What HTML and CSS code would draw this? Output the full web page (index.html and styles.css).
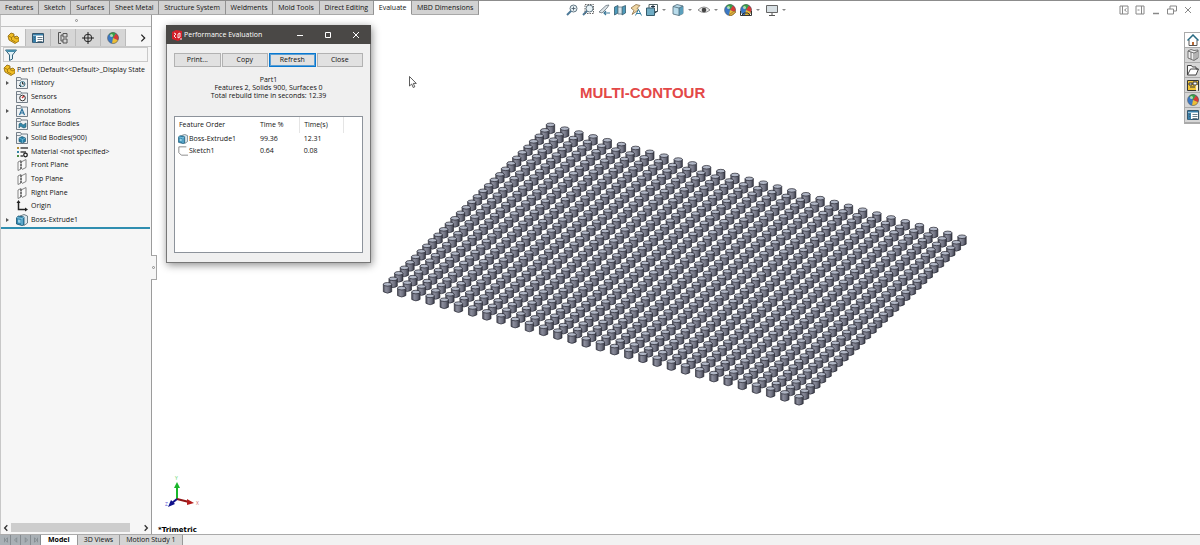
FILE: index.html
```html
<!doctype html>
<html lang="en">
<head>
<meta charset="utf-8">
<meta name="viewport" content="width=device-width, initial-scale=1">
<title>Part1</title>
<link rel="stylesheet" href="styles.css">
</head>
<body>

<!-- shared icon shapes -->

<svg class="defs" aria-hidden="true">
	<defs>
		<linearGradient id="steel">
			<stop offset="0" stop-color="#4b4c59"/>
			<stop offset=".3" stop-color="#8b8d9c"/>
			<stop offset=".65" stop-color="#717382"/>
			<stop offset="1" stop-color="#383945"/>
		</linearGradient>
		<symbol id="part" viewBox="0 0 12 12">
			<path d="M1 4l3-3 3 1v3l3-1 2 2v3l-4 2.500-6-3.500z" fill="#f0bd25" stroke="#8d6507" stroke-width=".8"/>
			<path d="M1.500 4l3 1.500 2.500-2M4.500 5.500v2.500l4 2M7 5.500l3 1.500 1.500-1" fill="none" stroke="#8d6507" stroke-width=".7"/>
		</symbol>
		<symbol id="list" viewBox="0 0 12 12">
			<path d="M.5 1.500h11v9H.5z" fill="#fff" stroke="#36566d"/>
			<path d="M1 2h10v1.500H1zM1 4h3v6.500H1z" fill="#3980aa"/>
			<path d="M5.500 5.500h5M5.500 7.500h5M5.500 9.500h5M2 5.500h1M2 7.500h1" stroke="#425d6d" stroke-width=".8"/>
		</symbol>
		<symbol id="config" viewBox="0 0 12 12">
			<path d="M4 .5H1.500v11H4M6 1.500h4v3.500H6zM6 7h4v4H6zM4 3v6M4 3h2M4 9h2" fill="none" stroke="#555"/>
		</symbol>
		<symbol id="target" viewBox="0 0 12 12">
			<circle cx="6" cy="6" r="3.800" fill="none" stroke="#222"/>
			<path d="M6 0v12M0 6h12" stroke="#222"/>
		</symbol>
		<symbol id="ball" viewBox="0 0 12 12">
			<circle cx="6" cy="6" r="5.500" fill="#3b78c4"/>
			<path d="M6 6L2 2.200A5.500 5.500 0 0 1 9 1.400z" fill="#37a447"/>
			<path d="M6 6L9 1.400A5.500 5.500 0 0 1 11 8.200z" fill="#da3b35"/>
			<path d="M6 6l5 2.200A5.500 5.500 0 0 1 5 11.400z" fill="#edbd35"/>
			<circle cx="6" cy="6" r="5.500" fill="none" stroke="#555" stroke-width=".5"/>
			<circle cx="4.500" cy="3.500" r="1.500" fill="#fff" opacity=".6"/>
		</symbol>
		<symbol id="folder" viewBox="0 0 12 12">
			<path d="M.5 11.500V.5h4l1 1.500h6v9.500z" fill="#eef1f3" stroke="#65717c" stroke-width=".9"/>
			<path d="M.5 3.500h4l1-1.500" fill="none" stroke="#65717c" stroke-width=".8"/>
		</symbol>
		<symbol id="plane" viewBox="0 0 12 12">
			<path d="M2 3l3-1.500V10l-3 1.500zM6 2.500L10 .5v8l-4 2" fill="#fafafa" stroke="#777" stroke-width=".9"/>
			<path d="M5 2v8" stroke="#333" stroke-dasharray="2 1"/>
		</symbol>
		<symbol id="extrude" viewBox="0 0 12 12">
			<path d="M4 2l4-1.500 3.500 1.500v7L8 11.500" fill="#dce7ed" stroke="#52636c" stroke-width=".8"/>
			<path d="M.5 3.500l2-1.500L8 3v8l-2 .5-5.500-1.500z" fill="#3189b3" stroke="#16536f" stroke-width=".8"/>
			<path d="M.5 3.500L6 4.500V11M6 4.500L8 3" fill="none" stroke="#9ed3e8" stroke-width=".8"/>
			<path d="M2 5.500l2.500.5v3L2 8.500z" fill="#9bd0e5"/>
		</symbol>
		<symbol id="cube" viewBox="0 0 12 12">
			<path d="M1 2.500L5 .5l6 1.500v7.500l-4 2-6-1.500z" fill="#b9dceb" stroke="#4c6876" stroke-width=".8"/>
			<path d="M7 4l4-2v7.500l-4 2z" fill="#5a9fbc"/>
			<path d="M1 2.500L7 4v7.500M7 4l4-2" fill="none" stroke="#4c6876" stroke-width=".8"/>
		</symbol>
		<symbol id="lens" viewBox="0 0 12 12">
			<circle cx="7.500" cy="4.500" r="3.500" fill="#e8f2f6" stroke="#637783"/>
			<path d="M5 7L1 11" stroke="#4b7897" stroke-width="2"/>
		</symbol>
	</defs>
</svg>

<nav class="ribbon">
	<button>Features</button>
	<button>Sketch</button>
	<button>Surfaces</button>
	<button>Sheet Metal</button>
	<button>Structure System</button>
	<button>Weldments</button>
	<button>Mold Tools</button>
	<button>Direct Editing</button>
	<button class="active">Evaluate</button>
	<button>MBD Dimensions</button>
</nav>

<main class="workspace">

	<!-- feature tree -->

	<aside class="panel">
		<div class="grip"><i></i></div>
		<div class="panel-tabs">
			<button class="active" aria-label="Feature tree"><svg><use href="#part"/></svg></button>
			<button aria-label="Properties"><svg><use href="#list"/></svg></button>
			<button aria-label="Configurations"><svg><use href="#config"/></svg></button>
			<button aria-label="Dimensions"><svg><use href="#target"/></svg></button>
			<button aria-label="Display"><svg><use href="#ball"/></svg></button>
			<button class="more" aria-label="More"><svg viewBox="0 0 12 12"><path d="M4 2l4 4-4 4" fill="none" stroke="#222" stroke-width="1.500"/></svg></button>
		</div>
		<div class="filter">
			<svg viewBox="0 0 12 12"><path d="M.5 1h11L7.500 6v4l-3 1.500V6z" fill="#e2f0f6" stroke="#36647c"/><path d="M1 1h10L9.500 3h-7z" fill="#448eac"/></svg>
			<input type="text" aria-label="Filter">
		</div>
		<ul class="tree">
			<li class="root"><svg><use href="#part"/></svg>Part1&nbsp; (Default&lt;&lt;Default&gt;_Display State</li>
			<li class="parent"><svg viewBox="0 0 12 12"><use href="#folder"/><circle cx="6.500" cy="7" r="2.500" fill="none" stroke="#3b7890"/><path d="M6.500 5v2h2M3 8l2 2" fill="none" stroke="#333"/></svg>History</li>
			<li><svg viewBox="0 0 12 12"><use href="#folder"/><circle cx="6.500" cy="7" r="2.800" fill="#fff" stroke="#333"/><path d="M6 7l2-2" stroke="#c33" stroke-width="1.500"/></svg>Sensors</li>
			<li class="parent"><svg viewBox="0 0 12 12"><use href="#folder"/><path d="M3.500 10L6 4l2.500 6M4.500 8h3" fill="none" stroke="#286f9b" stroke-width="1.200"/></svg>Annotations</li>
			<li><svg viewBox="0 0 12 12"><use href="#folder"/><path d="M3 6q2-2 3 0t4-1v4q-2 2-4 0t-3 1z" fill="#3689ac" stroke="#205466" stroke-width=".6"/></svg>Surface Bodies</li>
			<li class="parent"><svg viewBox="0 0 12 12"><use href="#folder"/><path d="M3 6l3-1.500L9.500 6v3.500l-3 1.500L3 9.500z" fill="#267fa7" stroke="#154c65" stroke-width=".6"/><path d="M3 6l3.500 1.500 3-1.500M6.500 7.500V11" fill="none" stroke="#8cc9df" stroke-width=".6"/></svg>Solid Bodies(900)</li>
			<li><svg viewBox="0 0 12 12"><path d="M1 1h2v2H1z" fill="#b18c35"/><path d="M1 5h2v2H1z" fill="#3584a6"/><path d="M1 9h2v2H1z" fill="#4c8a42"/><path d="M4.500 2H12M4.500 6H10M4.500 10H7" stroke="#444" stroke-width="1.300"/><circle cx="9.500" cy="9" r="1.800" fill="none" stroke="#222" stroke-width="1.300"/></svg>Material &lt;not specified&gt;</li>
			<li><svg><use href="#plane"/></svg>Front Plane</li>
			<li><svg><use href="#plane"/></svg>Top Plane</li>
			<li><svg><use href="#plane"/></svg>Right Plane</li>
			<li><svg viewBox="0 0 12 12"><path d="M2.500 2v7.500H10" fill="none" stroke="#222" stroke-width="1.500"/><path d="M.5 3l2-3 2 3zM9 7.500l3 2-3 2z" fill="#222"/></svg>Origin</li>
			<li class="parent"><svg><use href="#extrude"/></svg>Boss-Extrude1</li>
		</ul>
		<div class="scrollbar">
			<button aria-label="Scroll left"><svg viewBox="0 0 6 6"><path d="M4 1L2 3l2 2" fill="none" stroke="#333"/></svg></button>
			<span></span>
			<button aria-label="Scroll right"><svg viewBox="0 0 6 6"><path d="M2 1l2 2-2 2" fill="none" stroke="#333"/></svg></button>
		</div>
		<button class="collapse" aria-label="Collapse panel"><i></i></button>
	</aside>

	<!-- graphics area -->

	<section class="view">
		<svg class="model" id="model" viewBox="0 0 590 290" aria-hidden="true">
			<defs>
				<g id="pin">
					<path d="M-4.200 1.800v7.400q4.200 3 8.400 0V1.800z" fill="url(#steel)" stroke="#1d1e28" stroke-width=".6"/>
					<ellipse cy="1.800" rx="4.200" ry="1.800" fill="#b0b6c5" stroke="#22232d" stroke-width=".7"/>
				</g>
			</defs>
		</svg>

		<div class="view-tools">
			<button aria-label="Zoom to fit"><svg viewBox="0 0 12 12"><use href="#lens"/><path d="M5.500 4.500h4M7.500 2.500v4" stroke="#456" stroke-width=".8"/></svg></button>
			<button aria-label="Zoom to area"><svg viewBox="0 0 12 12"><use href="#lens"/><path d="M3 .5h8.500v9H3z" fill="none" stroke="#666" stroke-dasharray="1.500 1"/></svg></button>
			<button aria-label="Previous view"><svg viewBox="0 0 12 12"><path d="M1 8l7-6.500L11 1 9 4 4 9z" fill="#dce4e8" stroke="#68747c" stroke-width=".8"/><path d="M12 9H6M8 7L6 9l2 2" fill="none" stroke="#3b7898" stroke-width="1.200"/></svg></button>
			<button aria-label="Section view"><svg viewBox="0 0 12 12"><path d="M.5 3L4 1.500V9L.5 11zM8 3l3.500-1.500V9L8 11z" fill="#4d9abb" stroke="#355b6c" stroke-width=".8"/><path d="M4 3h4v7H4z" fill="#d6e4ea" stroke="#607b88" stroke-width=".8"/></svg></button>
			<button aria-label="Annotation views"><svg viewBox="0 0 12 12"><path d="M1 4l5-3.500 4 1-3 3 2 1-7 5 2-4z" fill="#efd6a3" stroke="#8a6e47" stroke-width=".8"/><path d="M5.500 11.500l3-6 3 6M6.500 9.500h4" fill="none" stroke="#3980a1"/></svg></button>
			<button class="drop" aria-label="View orientation"><svg viewBox="0 0 12 12"><path d="M3 .5h8.500v7H3z" fill="#fff" stroke="#566"/><path d="M.5 4h8v7.500h-8z" fill="#71adc5" stroke="#365c6c"/><path d="M5 2.500h4M7 1v3M9 9l2.500-2" stroke="#234"/></svg></button>
			<button class="drop" aria-label="Display style"><svg><use href="#cube"/></svg></button>
			<button class="drop" aria-label="Hide or show"><svg viewBox="0 0 12 12"><path d="M0 6q6-6 12 0-6 5-12 0z" fill="#eee" stroke="#777" stroke-width=".8"/><circle cx="6" cy="6" r="2.300" fill="#444"/></svg></button>
			<button aria-label="Edit appearance"><svg viewBox="0 0 12 12"><use href="#ball"/><path d="M5 11l5-4 2 1-5 4z" fill="#d9ae42" stroke="#875f20" stroke-width=".6"/></svg></button>
			<button class="drop" aria-label="Apply scene"><svg viewBox="0 0 12 12"><use href="#ball"/><path d="M.5 7v4.500h11V7M2 11l2-2h4l2 2" fill="none" stroke="#333"/></svg></button>
			<button class="drop" aria-label="View settings"><svg viewBox="0 0 12 12"><path d="M.5 1.500h11v7H.5z" fill="#d8e0e4" stroke="#666"/><path d="M6 9v2M3 11.500h6" stroke="#555"/></svg></button>
		</div>

		<div class="window-tools">
			<button aria-label="Dock left"><svg viewBox="0 0 10 10"><path d="M1 1h8v8H1zM3.500 1v8M7.500 3.500L5.500 5l2 1.500"/></svg></button>
			<button aria-label="Dock right"><svg viewBox="0 0 10 10"><path d="M1 1h8v8H1zM6.500 1v8M2.500 5h2"/></svg></button>
			<button aria-label="Minimize"><svg viewBox="0 0 10 10"><path d="M2 8.500h6" stroke-width="1.500"/></svg></button>
			<button aria-label="Restore"><svg viewBox="0 0 10 10"><path d="M.5 4h6v5h-6zM3 4V1h6.500v5h-3"/></svg></button>
			<button aria-label="Close part"><svg viewBox="0 0 10 10"><path d="M2 2l6 6M8 2L2 8"/></svg></button>
		</div>

		<h1>MULTI-CONTOUR</h1>

		<div class="task-pane">
			<button class="active" aria-label="Home"><svg viewBox="0 0 12 12"><path d="M2 6v5.500h8V6" fill="#fff" stroke="#555"/><path d="M.5 6.500L6 1l5.500 5.500" fill="none" stroke="#286a82" stroke-width="1.500"/><path d="M5 8h2v3H5z" fill="#b76832"/></svg></button>
			<button aria-label="Design library"><svg viewBox="0 0 12 12"><path d="M1 2l3-1.500 3 1 4-.5v8L7 11.500 1 9zM4 3v7M1 2l6 2v7M7 4l4-2M9 3v7" fill="#eee" stroke="#555" stroke-width=".8"/></svg></button>
			<button aria-label="File explorer"><svg viewBox="0 0 12 12"><path d="M.5 11V1.500h4l1 1.500H9v2h2.500L9 11z" fill="#fff" stroke="#444"/><path d="M.5 11L3.500 5H11" fill="none" stroke="#444"/></svg></button>
			<button aria-label="View palette"><svg viewBox="0 0 12 12"><path d="M.5 1.500h11v10H.5z" fill="#f2c638" stroke="#333"/><path d="M2 4h3v2H2zM6 3h4v3H6zM3 8h5" fill="#fff" stroke="#333"/><path d="M10 6v6" stroke="#fff" stroke-width="1.500"/></svg></button>
			<button aria-label="Appearances"><svg><use href="#ball"/></svg></button>
			<button aria-label="Custom properties"><svg><use href="#list"/></svg></button>
		</div>

		<svg class="triad" viewBox="0 0 40 40" aria-hidden="true">
			<path d="M14 24V10" stroke="#19b62a" stroke-width="2"/>
			<path d="M11 13l3-6 3 6z" fill="#19b62a"/>
			<path d="M14 24l12 3" stroke="#911717" stroke-width="2"/>
			<path d="M24 24l7 4-7 2z" fill="#b51c1c"/>
			<path d="M14 24l-5 4" stroke="#10108b" stroke-width="2"/>
			<path d="M8 25l4 4-7 3z" fill="#10108b"/>
			<text x="12" y="5" fill="#5ad362">Y</text>
			<text x="33" y="30" fill="#d36a6a">X</text>
			<text x="2" y="31" fill="#5555d5">Z</text>
		</svg>
		<p class="orientation">*Trimetric</p>
		<svg class="cursor" viewBox="0 0 8 12" aria-hidden="true"><path d="M.5.500v9.500l2.200-2 1.500 3.500 1.600-.7-1.500-3.400h3z" fill="#fff" stroke="#333" stroke-width=".8"/></svg>
	</section>

	<!-- performance evaluation window -->

	<div class="dialog" role="dialog" aria-labelledby="dialog_title">
		<header>
			<svg viewBox="0 0 12 12"><path d="M1 3l4-2 6 1v8l-4 2-6-2z" fill="#d5202a"/><path d="M3 4l2 1-2 2 2 2M7 5l2-1v4l-2 1zM9 10h2" fill="none" stroke="#fff" stroke-width=".9"/></svg>
			<h2 id="dialog_title">Performance Evaluation</h2>
			<button aria-label="Minimize window"><svg viewBox="0 0 8 8"><path d="M1 4.500h6"/></svg></button>
			<button aria-label="Maximize window"><svg viewBox="0 0 8 8"><path d="M1.500 1.500h5v5h-5z"/></svg></button>
			<button aria-label="Close window"><svg viewBox="0 0 8 8"><path d="M1 1l6 6M7 1L1 7"/></svg></button>
		</header>
		<div class="actions">
			<button>Print...</button>
			<button>Copy</button>
			<button class="default">Refresh</button>
			<button>Close</button>
		</div>
		<p>Part1<br>Features 2, Solids 900, Surfaces 0<br>Total rebuild time in seconds: 12.39</p>
		<div class="results">
			<table>
				<thead>
					<tr><th>Feature Order</th><th>Time %</th><th>Time(s)</th></tr>
				</thead>
				<tbody>
					<tr><td><svg><use href="#extrude"/></svg>Boss-Extrude1</td><td>99.36</td><td>12.31</td></tr>
					<tr><td><svg viewBox="0 0 12 12"><path d="M10 1H1v7l3 3h8" fill="none" stroke="#777"/></svg>Sketch1</td><td>0.64</td><td>0.08</td></tr>
				</tbody>
			</table>
		</div>
	</div>
</main>

<footer class="sheets">
	<div class="sheet-nav">
		<button aria-label="First"><svg viewBox="0 0 8 8"><path d="M2 1v6M6 1L3 4l3 3z"/></svg></button>
		<button aria-label="Previous"><svg viewBox="0 0 8 8"><path d="M5 1L2 4l3 3z"/></svg></button>
		<button aria-label="Next"><svg viewBox="0 0 8 8"><path d="M3 1l3 3-3 3z"/></svg></button>
		<button aria-label="Last"><svg viewBox="0 0 8 8"><path d="M6 1v6M2 1l3 3-3 3z"/></svg></button>
	</div>
	<button class="active">Model</button>
	<button>3D Views</button>
	<button>Motion Study 1</button>
</footer>

<script src="model.js"></script>
</body>
</html>
```
FILE: model.js
```js
// Extruded pins, 30 by 30, drawn from the back row to the front.

const COUNT = 30;
let model = document.getElementById("model");

for (let row = 0; row < COUNT; row++) {
	for (let col = 0; col < COUNT; col++) {
		let pin = document.createElementNS("http://www.w3.org/2000/svg", "use");
		pin.setAttribute("href", "#pin");
		pin.setAttribute("x", 170.5 + col * 14.19 - row * 5.62);
		pin.setAttribute("y", 3 + col * 3.86 + row * 5.5);
		model.appendChild(pin);
	}
}
```
FILE: styles.css
```css
* {
	box-sizing: border-box;
}

html, body {
	height: 100%;
	margin: 0;
}

body {
	display:        flex;
	flex-direction: column;
	overflow:       hidden;
	border-top:     1px solid #8c8c8c;
	background:     white;
	color:          #111;
	font:           7px/10px "Open Sans", "Noto Sans", sans-serif;
}

button {
	display:         flex;
	align-items:     center;
	justify-content: center;
	padding:         0;
	border:          0;
	background:      none;
	color:           inherit;
	font:            inherit;
	white-space:     nowrap;
}

svg {
	flex:   none;
	width:  12px;
	height: 12px;
}

.defs {
	position: absolute;
	width:    0;
	height:   0;
}


/* ====  Ribbon tabs  ==== */

.ribbon {
	display:   flex;
	flex:      none;
	max-width: 479px;
	height:    14px;
}

.ribbon button {
	flex:          0 1 auto;
	min-width:     0;
	padding:       0 5px;
	border-right:  1px solid #929292;
	border-bottom: 1px solid #a8a8a8;
	background:    #d2d2d2;
}

.ribbon .active {
	border-bottom-color: white;
	background:          white;
}


/* ====  Feature tree  ==== */

.workspace {
	position:   relative;
	display:    flex;
	flex:       1;
	min-height: 0;
}

.panel {
	position:       relative;
	display:        flex;
	flex:           none;
	flex-direction: column;
	width:          152px;
	border-right:   1px solid #9b9b9b;
	border-left:    1px solid #c8c8c8;
	background:     #f6f6f6;
}

.grip {
	display:         flex;
	align-items:     center;
	justify-content: center;
	height:          12px;
	border-bottom:   1px solid #c2c2c2;
}

.grip i,
.collapse i {
	width:         3px;
	height:        3px;
	border:        1px solid #8a8a8a;
	border-radius: 50%;
}

.panel-tabs {
	display:       flex;
	height:        18px;
	margin-top:    2px;
	border-bottom: 1px solid #c8c8c8;
}

.panel-tabs button {
	width:        25px;
	border-right: 1px solid #bbb;
	background:   #d6d6d6;
}

.panel-tabs .active {
	background: #f6f6f6;
}

.panel-tabs .more {
	width:        12px;
	margin-right: 2px;
	margin-left:  auto;
	border:       0;
	background:   none;
}

.panel-tabs .more svg {
	width:  10px;
	height: 10px;
}

.filter {
	display:     flex;
	align-items: center;
	height:      15px;
	margin:      0 3px 0 2px;
	padding:     0 1px;
	border:      1px solid #c9c9c9;
}

.filter input {
	flex:       1;
	min-width:  0;
	border:     0;
	outline:    0;
	background: none;
	font:       inherit;
}

.tree {
	display:        grid;
	grid-auto-rows: 1fr;
	height:         167px;
	margin:         0 1px 0 0;
	padding:        1px 0 0;
	overflow:       hidden;
	border-bottom:  2px solid #2f8eb0;
	list-style:     none;
	white-space:    nowrap;
}

.tree li {
	display:      flex;
	align-items:  center;
	gap:          3px;
	padding-left: 15px;
}

.tree .root {
	gap:          2px;
	padding-left: 2px;
}

.tree .parent {
	padding-left: 5px;
}

.tree .parent::before {
	width:         0;
	margin-right:  4px;
	border:        2px solid transparent;
	border-left:   3px solid #555;
	border-right:  0;
	content:       "";
}

.scrollbar {
	display:    flex;
	height:     12px;
	margin-top: auto;
}

.scrollbar button {
	width: 10px;
}

.scrollbar svg {
	width:  8px;
	height: 8px;
}

.scrollbar span {
	flex:         1;
	height:       9px;
	margin:       1px 11px 0 0;
	background:   #cdcdcd;
}

.collapse {
	position:    absolute;
	top:         240px;
	right:       -6px;
	width:       6px;
	height:      25px;
	border:      1px solid #a5a5a5;
	border-left: 0;
	background:  #f6f6f6;
}


/* ====  Graphics area  ==== */

.view {
	position:  relative;
	flex:      1;
	min-width: 0;
}

.model {
	position: absolute;
	top:      105px;
	left:     228px;
	width:    590px;
	height:   290px;
}

.view-tools {
	position: absolute;
	top:      -11px;
	left:     414px;
	display:  flex;
	gap:      4px;
}

.view-tools .drop::after {
	margin:        0 2px 0 4px;
	border:        2px solid transparent;
	border-top:    2px solid #888;
	border-bottom: 0;
	content:       "";
}

.window-tools {
	position: absolute;
	top:      -10px;
	right:    7px;
	display:  flex;
	gap:      6px;
}

.window-tools svg {
	width:  10px;
	height: 10px;
	fill:   none;
	stroke: #888;
}

h1 {
	position:    absolute;
	top:         69px;
	left:        428px;
	margin:      0;
	color:       #e34848;
	font:        bold 15px/18px "Liberation Sans", Arial, sans-serif;
	white-space: nowrap;
}

.task-pane {
	position:       absolute;
	top:            17px;
	right:          0;
	display:        flex;
	flex-direction: column;
	border:         1px solid #aaa;
	border-right:   0;
}

.task-pane button {
	width:         15px;
	height:        15px;
	border-bottom: 1px solid #aaa;
	background:    #d6d6d6;
}

.task-pane .active {
	background: white;
}

.triad {
	position:  absolute;
	bottom:    19px;
	left:      11px;
	width:     40px;
	height:    40px;
	font-size: 5px;
}

.orientation {
	position: absolute;
	bottom:   -1px;
	left:     6px;
	margin:   0;
	color:    black;
	font:     bold 7px/10px "DejaVu Sans", Verdana, sans-serif;
}

.cursor {
	position: absolute;
	top:      61px;
	left:     257px;
	width:    8px;
	height:   12px;
}


/* ====  Performance evaluation window  ==== */

.dialog {
	position:       absolute;
	top:            10px;
	left:           166px;
	display:        flex;
	flex-direction: column;
	width:          205px;
	height:         238px;
	border:         1px solid #777;
	background:     #f0f0f0;
	box-shadow:     1px 2px 8px rgba(0, 0, 0, .45);
}

.dialog header {
	display:     flex;
	align-items: center;
	height:      19px;
	margin:      -1px -1px 0;
	padding:     0 1px 0 5px;
	background:  #4a4846;
	color:       white;
}

.dialog h2 {
	flex:        1;
	margin:      0 0 0 1px;
	font-size:   7px;
	font-weight: 400;
}

.dialog header button {
	width:  28px;
	height: 19px;
}

.dialog header button svg {
	width:  8px;
	height: 8px;
	fill:   none;
	stroke: white;
}

.actions {
	display:               grid;
	grid-template-columns: repeat(4, 1fr);
	gap:                   1px;
	padding:               9px 7px 0;
}

.actions button {
	height:     14px;
	border:     1px solid #b2b2b2;
	background: #e1e1e1;
}

.actions .default {
	border:         1px solid #0878d0;
	outline:        1px solid #5b9fd4;
	outline-offset: -2px;
}

.dialog p {
	margin:      9px 0 16px;
	line-height: 8px;
	text-align:  center;
}

.results {
	flex:       1;
	margin:     0 7px 9px;
	border:     1px solid #8d939b;
	background: white;
}

table {
	width:           169px;
	border-collapse: collapse;
	table-layout:    fixed;
}

th,
td {
	height:      12px;
	padding:     0 0 0 4px;
	text-align:  left;
	font-weight: 400;
	line-height: 10px;
}

th {
	height:       16px;
	border-right: 1px solid #e5e5e5;
}

th:first-child {
	width:  81px;
	border: 0;
}

td:first-child {
	display:      flex;
	align-items:  center;
	gap:          1px;
	padding-left: 3px;
}

td svg {
	width:  10px;
	height: 10px;
}


/* ====  Sheet tabs  ==== */

.sheets {
	display:    flex;
	flex:       none;
	height:     11px;
	border-top: 1px solid #aaa;
	background: #f2f2f2;
}

.sheets > button {
	padding:      0 6px;
	border-right: 1px solid #999;
	background:   #d4d4d4;
}

.sheets > .active {
	padding:     0 7px;
	background:  white;
	color:       black;
	font-weight: 700;
}

.sheet-nav {
	display:      flex;
	padding-left: 1px;
	background:   #a9b0b5;
}

.sheet-nav button {
	width:        10px;
	border-right: 1px solid #858b90;
}

.sheet-nav svg {
	width:  6px;
	height: 6px;
	fill:   none;
	stroke: #7c8489;
}
```
